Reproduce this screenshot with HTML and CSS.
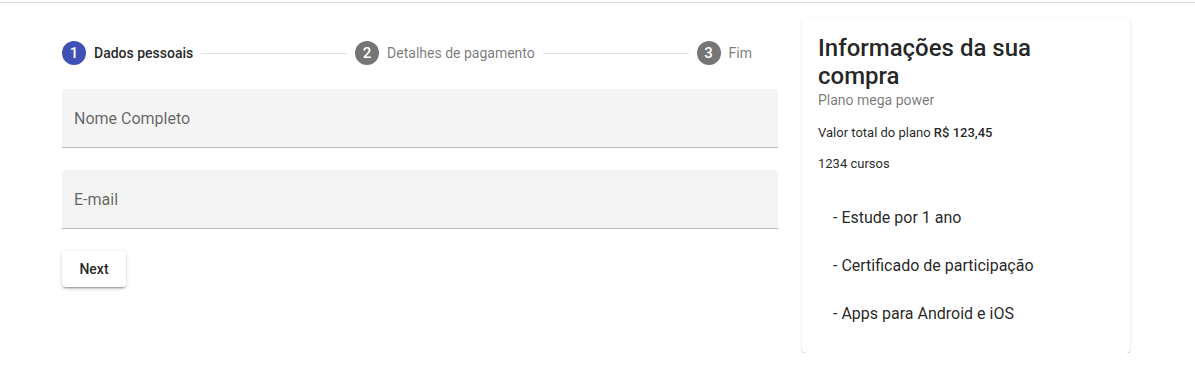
FILE: index.html
```html
<!DOCTYPE html>
<html lang="pt">
<head>
<meta charset="utf-8">
<title>Checkout</title>
<link rel="stylesheet" href="styles.css">
</head>
<body>
<div class="topbar"></div>
<main class="page">
  <section class="form-col">
    <div class="stepper">
      <div class="step active"><span class="step-icon">1</span><span class="step-label">Dados pessoais</span></div>
      <div class="step-line"></div>
      <div class="step"><span class="step-icon">2</span><span class="step-label">Detalhes de pagamento</span></div>
      <div class="step-line"></div>
      <div class="step"><span class="step-icon">3</span><span class="step-label">Fim</span></div>
    </div>
    <div class="field"><span class="placeholder">Nome Completo</span></div>
    <div class="field"><span class="placeholder">E-mail</span></div>
    <button class="btn">Next</button>
  </section>
  <aside class="card">
    <h2 class="card-title">Informações da sua compra</h2>
    <div class="card-subtitle">Plano mega power</div>
    <p class="line">Valor total do plano <strong>R$ 123,45</strong></p>
    <p class="line">1234 cursos</p>
    <ul class="list">
      <li>- Estude por 1 ano</li>
      <li>- Certificado de participação</li>
      <li>- Apps para Android e iOS</li>
    </ul>
  </aside>
</main>
</body>
</html>
```
FILE: styles.css
```css
html, body {
  margin: 0;
  padding: 0;
  background: #fff;
  font-family: Roboto, "Noto Sans", sans-serif;
  color: rgba(0,0,0,.87);
}
.topbar {
  height: 2px;
  border-bottom: 1px solid #dcdcdc;
}
.page {
  display: flex;
  align-items: flex-start;
  gap: 24px;
  padding: 14px 0 0 62px;
}
.form-col {
  width: 716px;
  display: flex;
  flex-direction: column;
  align-items: flex-start;
}
.stepper {
  align-self: stretch;
  height: 72px;
  display: flex;
  align-items: center;
  padding-right: 26px;
}
.step {
  display: flex;
  align-items: center;
  gap: 8px;
}
.step-icon {
  width: 24px;
  height: 24px;
  border-radius: 50%;
  background: #757575;
  color: #fff;
  font-size: 15px;
  font-weight: 500;
  display: flex;
  align-items: center;
  justify-content: center;
}
.step.active .step-icon { background: #3f51b5; }
.step-label {
  font-size: 14px;
  color: rgba(0,0,0,.54);
}
.step.active .step-label {
  color: rgba(0,0,0,.87);
  font-weight: 500;
}
.step-line {
  flex: 1;
  height: 1px;
  background: #e0e0e0;
  margin: 0 8px;
}
.field {
  align-self: stretch;
  height: 58px;
  background: #f4f4f4;
  border-radius: 4px 4px 0 0;
  border-bottom: 1px solid #b8b8b8;
  display: flex;
  align-items: center;
  padding: 0 12px;
  margin-bottom: 22px;
}
.placeholder {
  font-size: 16px;
  color: rgba(0,0,0,.6);
}
.btn {
  font-family: inherit;
  width: 64px;
  height: 36px;
  border: 0;
  border-radius: 4px;
  background: #fff;
  font-size: 14px;
  font-weight: 500;
  color: rgba(0,0,0,.87);
  box-shadow: 0 3px 1px -2px rgba(0,0,0,.2), 0 2px 2px 0 rgba(0,0,0,.14), 0 1px 5px 0 rgba(0,0,0,.12);
  cursor: pointer;
}
.card {
  width: 296px;
  margin-top: 1px;
  padding: 16px;
  background: #fff;
  border-radius: 4px;
  box-shadow: 0 2px 1px -1px rgba(0,0,0,.2), 0 1px 1px 0 rgba(0,0,0,.14), 0 1px 3px 0 rgba(0,0,0,.12);
}
.card-title {
  margin: 0;
  width: 230px;
  font-size: 24px;
  font-weight: 500;
  line-height: 28px;
  color: rgba(0,0,0,.87);
}
.card-subtitle {
  font-size: 14px;
  line-height: 20px;
  color: rgba(0,0,0,.54);
  margin-bottom: 12px;
}
.line {
  margin: 0 0 10px;
  font-size: 13px;
  line-height: 21px;
}
.line strong { font-weight: 500; }
.list {
  list-style: none;
  margin: 11px 0 0;
  padding: 8px 0 0;
}
.list li {
  height: 48px;
  display: flex;
  align-items: center;
  padding: 0 15px;
  font-size: 16px;
}
```
